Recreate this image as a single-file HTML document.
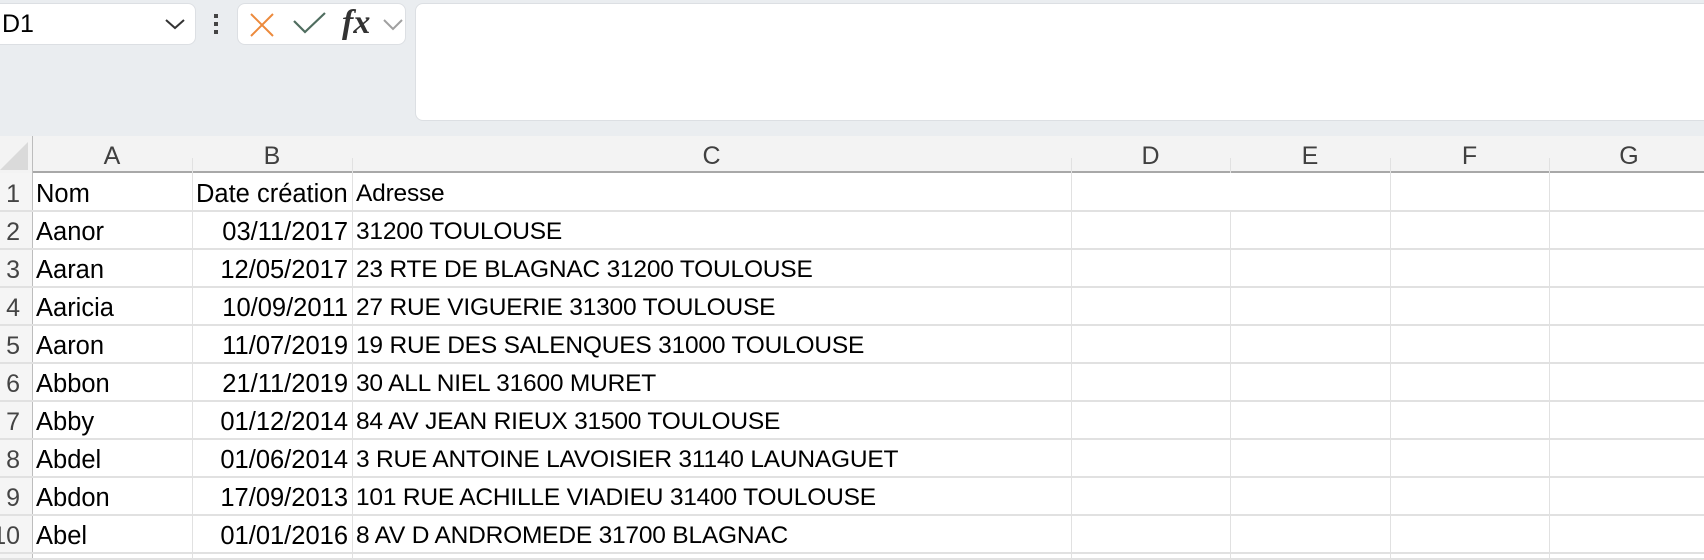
<!DOCTYPE html>
<html><head><meta charset="utf-8"><style>
*{margin:0;padding:0;box-sizing:border-box}
body{width:1704px;height:560px;overflow:hidden;background:#fff;font-family:"Liberation Sans",sans-serif;position:relative}
.top{position:absolute;left:0;top:0;width:1704px;height:136px;background:#eaedf0}
.box{position:absolute;background:#fff;border:1px solid #dcdfe3;border-radius:8px}
.hdr{position:absolute;top:136px;left:0;width:1704px;height:37px;background:#f3f3f3;border-bottom:2px solid #a8a8a8}
.cl{position:absolute;top:136px;height:37px;font-size:25px;color:#404040;text-align:center;line-height:40px}
.vl{position:absolute;width:1px;background:#e1e1e1}
.hl{position:absolute;left:0;width:1704px;height:2px;background:#e1e1e1}
.t{position:absolute;font-size:25.5px;color:#000;white-space:nowrap;line-height:38px}
.c{font-size:24.5px;letter-spacing:-0.2px}
.rn{position:absolute;left:-20px;width:40px;text-align:right;font-size:25px;color:#444;line-height:38px}
</style></head><body>
<div class="top"></div>
<div class="box" style="left:-10px;top:3px;width:206px;height:42px"></div>
<div class="t" style="left:2px;top:5px;font-size:25px">D1</div>
<svg style="position:absolute;left:164px;top:17px" width="22" height="14"><path d="M2 3 L11 11 L20 3" fill="none" stroke="#333" stroke-width="2"/></svg>
<div style="position:absolute;left:214px;top:14px;width:4px;height:4px;background:#444"></div>
<div style="position:absolute;left:214px;top:22px;width:4px;height:4px;background:#444"></div>
<div style="position:absolute;left:214px;top:30px;width:4px;height:4px;background:#444"></div>
<div class="box" style="left:237px;top:3px;width:169px;height:42px"></div>
<svg style="position:absolute;left:248px;top:11px" width="28" height="28"><path d="M3 3 L25 25 M25 3 L3 25" stroke="#ec8a3c" stroke-width="2" fill="none"/></svg>
<svg style="position:absolute;left:292px;top:11px" width="36" height="24"><path d="M2 10 L13 21 L33 2" stroke="#4f6d5f" stroke-width="2.2" fill="none"/></svg>
<div style="position:absolute;left:342px;top:3px;font-family:'Liberation Serif',serif;font-style:italic;font-weight:bold;font-size:34px;color:#333;line-height:40px">fx</div>
<svg style="position:absolute;left:382px;top:18px" width="22" height="14"><path d="M2 2 L11 11 L20 2" fill="none" stroke="#a0a0a0" stroke-width="2"/></svg>
<div class="box" style="left:415px;top:3px;width:1300px;height:118px"></div>
<div class="hdr"></div>
<div style="position:absolute;left:0;top:136px;width:32px;height:37px;background:#f3f3f3"></div>
<svg style="position:absolute;left:0;top:142px" width="28" height="28"><path d="M28 0 L28 28 L0 28 Z" fill="#dadada"/></svg>
<div style="position:absolute;left:0;top:173px;width:32px;height:387px;background:#f5f5f5"></div>
<div class="cl" style="left:32px;width:160px">A</div>
<div class="cl" style="left:192px;width:160px">B</div>
<div class="cl" style="left:352px;width:719px">C</div>
<div class="cl" style="left:1071px;width:159px">D</div>
<div class="cl" style="left:1230px;width:160px">E</div>
<div class="cl" style="left:1390px;width:159px">F</div>
<div class="cl" style="left:1549px;width:160px">G</div>
<div class="vl" style="left:32px;top:136px;height:424px;background:#bdbdbd"></div>
<div class="vl" style="left:192px;top:158px;height:402px"></div>
<div class="vl" style="left:352px;top:158px;height:402px"></div>
<div class="vl" style="left:1071px;top:158px;height:402px"></div>
<div class="vl" style="left:1230px;top:211px;height:349px"></div>
<div class="vl" style="left:1230px;top:158px;height:15px"></div>
<div class="vl" style="left:1390px;top:158px;height:402px"></div>
<div class="vl" style="left:1549px;top:158px;height:402px"></div>
<div class="hl" style="top:210px"></div><div class="hl" style="top:248px"></div><div class="hl" style="top:286px"></div><div class="hl" style="top:324px"></div><div class="hl" style="top:362px"></div><div class="hl" style="top:400px"></div><div class="hl" style="top:438px"></div><div class="hl" style="top:476px"></div><div class="hl" style="top:514px"></div><div class="hl" style="top:552px"></div><div class="hl" style="top:558px"></div>
<div class="rn" style="top:175px">1</div><div class="rn" style="top:213px">2</div><div class="rn" style="top:251px">3</div><div class="rn" style="top:289px">4</div><div class="rn" style="top:327px">5</div><div class="rn" style="top:365px">6</div><div class="rn" style="top:403px">7</div><div class="rn" style="top:441px">8</div><div class="rn" style="top:479px">9</div><div class="rn" style="top:517px">10</div>
<div class="t" style="left:36px;top:175px">Nom</div><div class="t" style="left:196px;top:175px">Date création</div><div class="t c" style="left:356px;top:175px">Adresse</div>
<div class="t" style="left:36px;top:213px">Aanor</div><div class="t" style="right:1356px;top:213px">03/11/2017</div><div class="t c" style="left:356px;top:213px">31200 TOULOUSE</div>
<div class="t" style="left:36px;top:251px">Aaran</div><div class="t" style="right:1356px;top:251px">12/05/2017</div><div class="t c" style="left:356px;top:251px">23 RTE DE BLAGNAC 31200 TOULOUSE</div>
<div class="t" style="left:36px;top:289px">Aaricia</div><div class="t" style="right:1356px;top:289px">10/09/2011</div><div class="t c" style="left:356px;top:289px">27 RUE VIGUERIE 31300 TOULOUSE</div>
<div class="t" style="left:36px;top:327px">Aaron</div><div class="t" style="right:1356px;top:327px">11/07/2019</div><div class="t c" style="left:356px;top:327px">19 RUE DES SALENQUES 31000 TOULOUSE</div>
<div class="t" style="left:36px;top:365px">Abbon</div><div class="t" style="right:1356px;top:365px">21/11/2019</div><div class="t c" style="left:356px;top:365px">30 ALL NIEL 31600 MURET</div>
<div class="t" style="left:36px;top:403px">Abby</div><div class="t" style="right:1356px;top:403px">01/12/2014</div><div class="t c" style="left:356px;top:403px">84 AV JEAN RIEUX 31500 TOULOUSE</div>
<div class="t" style="left:36px;top:441px">Abdel</div><div class="t" style="right:1356px;top:441px">01/06/2014</div><div class="t c" style="left:356px;top:441px">3 RUE ANTOINE LAVOISIER 31140 LAUNAGUET</div>
<div class="t" style="left:36px;top:479px">Abdon</div><div class="t" style="right:1356px;top:479px">17/09/2013</div><div class="t c" style="left:356px;top:479px">101 RUE ACHILLE VIADIEU 31400 TOULOUSE</div>
<div class="t" style="left:36px;top:517px">Abel</div><div class="t" style="right:1356px;top:517px">01/01/2016</div><div class="t c" style="left:356px;top:517px">8 AV D ANDROMEDE 31700 BLAGNAC</div>
</body></html>
